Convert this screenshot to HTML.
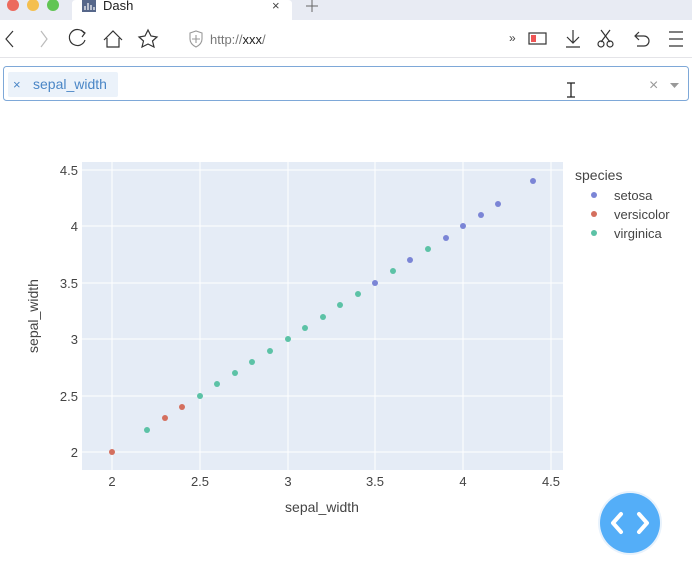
<!DOCTYPE html>
<html><head><meta charset="utf-8"><style>
body{margin:0;width:692px;height:556px;overflow:hidden;background:#fff;font-family:"Liberation Sans",sans-serif;}
</style></head><body>
<svg width="692" height="556" xmlns="http://www.w3.org/2000/svg" font-family="Liberation Sans, sans-serif">
<rect x="0" y="0" width="692" height="20" fill="#e8ebf3"/>
<path d="M72 20 V4 Q72 0 76 0 H288 Q292 0 292 4 V20 Z" fill="#fff"/>
<circle cx="13" cy="5" r="6" fill="#ec6a5e"/><circle cx="33" cy="5" r="6" fill="#f4bf4f"/><circle cx="53" cy="5" r="6" fill="#61c554"/>
<rect x="82" y="0" width="14" height="12" fill="#56678a"/>
<path d="M85 10V6M88 10V3M91 10V5M94 10V7" stroke="#fff" stroke-width="1.2"/>
<text x="103" y="10" font-size="13" fill="#222">Dash</text>
<text x="272" y="10" font-size="13" fill="#444">×</text>
<path d="M306 6H318M312 0V12" stroke="#666" stroke-width="1"/>
<rect x="0" y="20" width="692" height="37" fill="#fff"/>
<line x1="0" y1="57.5" x2="692" y2="57.5" stroke="#e4e4e8"/>
<g fill="none" stroke="#333" stroke-width="1.2">
<path d="M13 31 L6 39 L13 47"/>
<path d="M41 31 L47 39 L41 47" stroke="#bbb"/>
<path d="M84 33 A8 8 0 1 0 85 40" /><path d="M81 30 L85 33 L82 37"/>
<path d="M104 40 L113 31 L122 40 M107 38 V47 H119 V38"/>
<path d="M148 30 L151 36 L157 37 L152.5 41 L154 47 L148 44 L142 47 L143.5 41 L139 37 L145 36 Z"/>
<path d="M190 33 L196 31 L202 33 V39 Q202 44 196 47 Q190 44 190 39 Z M196 35 V43 M192 39 H200" stroke="#999" stroke-width="1.1"/>
<rect x="529" y="33" width="17" height="11" stroke-width="1.2"/><rect x="531" y="35" width="5" height="7" fill="#e55" stroke="none"/>
<path d="M573 30 V43 M567 37 L573 43 L579 37 M566 47 H580"/>
<path d="M601 30 L610 42 M610 30 L601 42"/><circle cx="601" cy="44" r="3"/><circle cx="610" cy="44" r="3"/>
<path d="M636 36 H644 A5 5 0 0 1 644 46 H637 M639 32 L635 36 L639 40"/>
<path d="M669 32 H683 M669 39 H683 M669 46 H683"/>
</g>
<text x="210" y="44" font-size="13" fill="#777">http://<tspan fill="#222">xxx</tspan>/</text>
<text x="509" y="42" font-size="12" fill="#444">»</text>
<rect x="3.5" y="66.5" width="685" height="34" rx="3" fill="#fff" stroke="#7ea8d8"/>
<rect x="8" y="72" width="110" height="25" rx="2" fill="#ebf2fa"/>
<text x="13" y="89" font-size="13" fill="#4a86c6">×</text>
<text x="33" y="89" font-size="14" fill="#4a86c6">sepal_width</text>
<path d="M567 83 H575 M571 83 V97 M567 97 H575" stroke="#222" stroke-width="1.3"/>
<text x="649" y="90" font-size="16" fill="#999">×</text>
<path d="M670 83 L679 83 L674.5 88 Z" fill="#999"/>
<rect x="82" y="162" width="481" height="308" fill="#e5ecf6"/>
<g stroke="#fff" stroke-width="1">
<line x1="112" y1="162" x2="112" y2="470"/><line x1="200" y1="162" x2="200" y2="470"/><line x1="288" y1="162" x2="288" y2="470"/><line x1="375" y1="162" x2="375" y2="470"/><line x1="463" y1="162" x2="463" y2="470"/><line x1="551" y1="162" x2="551" y2="470"/>
<line x1="82" y1="170" x2="563" y2="170"/><line x1="82" y1="226" x2="563" y2="226"/><line x1="82" y1="283" x2="563" y2="283"/><line x1="82" y1="339" x2="563" y2="339"/><line x1="82" y1="396" x2="563" y2="396"/><line x1="82" y1="452" x2="563" y2="452"/>
</g>
<g font-size="13" fill="#444" text-anchor="end">
<text x="78" y="175">4.5</text><text x="78" y="231">4</text><text x="78" y="288">3.5</text><text x="78" y="344">3</text><text x="78" y="401">2.5</text><text x="78" y="457">2</text>
</g>
<g font-size="13" fill="#444" text-anchor="middle">
<text x="112" y="486">2</text><text x="200" y="486">2.5</text><text x="288" y="486">3</text><text x="375" y="486">3.5</text><text x="463" y="486">4</text><text x="551" y="486">4.5</text>
<text x="322" y="512" font-size="14">sepal_width</text>
</g>
<text transform="translate(38 316) rotate(-90)" font-size="14" fill="#444" text-anchor="middle">sepal_width</text>
<g fill="#7b85d6">
<circle cx="375" cy="283" r="3"/><circle cx="410" cy="260" r="3"/><circle cx="446" cy="238" r="3"/><circle cx="463" cy="226" r="3"/><circle cx="481" cy="215" r="3"/><circle cx="498" cy="204" r="3"/><circle cx="533" cy="181" r="3"/>
</g>
<g fill="#d46f5e"><circle cx="112" cy="452" r="3"/><circle cx="165" cy="418" r="3"/><circle cx="182" cy="407" r="3"/></g>
<g fill="#5cc2a6">
<circle cx="147" cy="430" r="3"/><circle cx="200" cy="396" r="3"/><circle cx="217" cy="384" r="3"/><circle cx="235" cy="373" r="3"/><circle cx="252" cy="362" r="3"/><circle cx="270" cy="351" r="3"/><circle cx="288" cy="339" r="3"/><circle cx="305" cy="328" r="3"/><circle cx="323" cy="317" r="3"/><circle cx="340" cy="305" r="3"/><circle cx="358" cy="294" r="3"/><circle cx="393" cy="271" r="3"/><circle cx="428" cy="249" r="3"/>
</g>
<text x="575" y="180" font-size="14" fill="#444">species</text>
<circle cx="594" cy="195" r="3" fill="#7b85d6"/><text x="614" y="200" font-size="13" fill="#444">setosa</text>
<circle cx="594" cy="214" r="3" fill="#d46f5e"/><text x="614" y="219" font-size="13" fill="#444">versicolor</text>
<circle cx="594" cy="233" r="3" fill="#5cc2a6"/><text x="614" y="238" font-size="13" fill="#444">virginica</text>
<circle cx="630" cy="523" r="32" fill="#e8f2fc"/>
<circle cx="630" cy="523" r="30" fill="#54aef8"/>
<path d="M621 514 L613 523 L621 532 M639 514 L647 523 L639 532" stroke="#fff" stroke-width="4" fill="none" stroke-linecap="round" stroke-linejoin="round"/>
</svg>
</body></html>
